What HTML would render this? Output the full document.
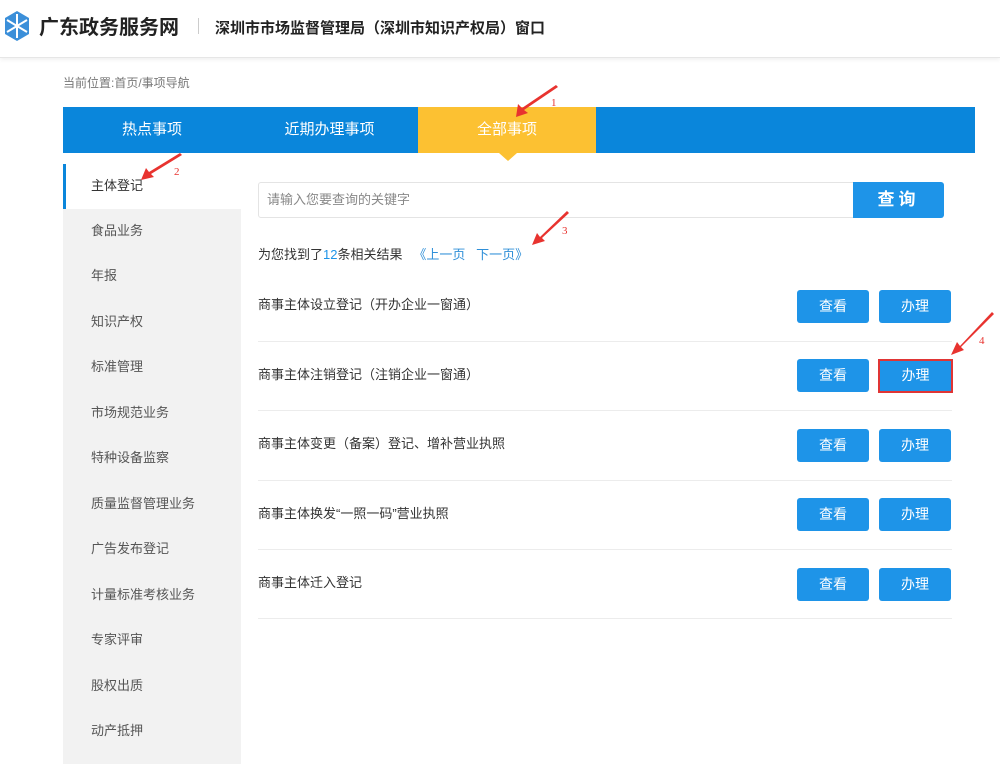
<!DOCTYPE html>
<html><head><meta charset="utf-8"><style>
*{margin:0;padding:0;box-sizing:border-box}
body{width:1000px;height:756px;overflow:hidden;background:#fff;font-family:"Liberation Sans","Noto Sans CJK SC",sans-serif;position:relative;color:#333}
.a{position:absolute}
.hdr{left:0;top:0;width:1000px;height:58px;border-bottom:1px solid #e6e6e6;box-shadow:0 2px 4px rgba(0,0,0,.06)}
.tab{top:107px;height:46px;line-height:46px;color:#fff;font-size:15px;text-align:center}
.side{left:63px;top:164px;width:178px;height:600px;background:#f2f2f2}
.si{left:63px;width:178px;font-size:13px;color:#555;padding-left:28px;height:20px;line-height:20px}
.btn{width:72px;height:33px;background:#1e94e8;color:#fff;font-size:14px;text-align:center;line-height:33px;border-radius:3px}
.row{left:258px;font-size:13px;color:#333}
.sep{left:258px;width:694px;height:1px;background:#ececec}
</style></head><body>
<div class="a hdr"></div>
<svg class="a" style="left:2px;top:10px" width="30" height="32" viewBox="0 0 30 32"><g fill="#3b8fd9"><polygon points="15,1 27,8 27,24 15,31 3,24 3,8"/></g><g stroke="#fff" stroke-width="2"><line x1="15" y1="4" x2="15" y2="28"/><line x1="5" y1="10" x2="25" y2="22"/><line x1="5" y1="22" x2="25" y2="10"/></g></svg>
<div class="a" style="left:39px;top:11px;font-size:20px;font-weight:bold;color:#222">广东政务服务网</div>
<div class="a" style="left:198px;top:18px;width:1px;height:16px;background:#ccc"></div>
<div class="a" style="left:215px;top:17px;font-size:15px;font-weight:bold;color:#222">深圳市市场监督管理局（深圳市知识产权局）窗口</div>
<div class="a" style="left:63px;top:74px;font-size:12px;color:#777">当前位置:首页/事项导航</div>
<div class="a" style="left:63px;top:107px;width:912px;height:46px;background:#0a86db"></div>
<div class="a tab" style="left:63px;width:178px">热点事项</div>
<div class="a tab" style="left:241px;width:177px">近期办理事项</div>
<div class="a tab" style="left:418px;width:178px;background:#fcc132">全部事项</div>
<div class="a" style="left:499px;top:153px;width:0;height:0;border-left:9px solid transparent;border-right:9px solid transparent;border-top:8px solid #fcc132"></div>
<div class="a side"></div>
<div class="a" style="left:63px;top:164px;width:178px;height:45px;background:#fff;border-left:3px solid #0a86db"></div>
<div class="a si" style="top:176px;color:#333">主体登记</div>
<div class="a si" style="top:221px">食品业务</div>
<div class="a si" style="top:266px">年报</div>
<div class="a si" style="top:312px">知识产权</div>
<div class="a si" style="top:357px">标准管理</div>
<div class="a si" style="top:403px">市场规范业务</div>
<div class="a si" style="top:448px">特种设备监察</div>
<div class="a si" style="top:494px">质量监督管理业务</div>
<div class="a si" style="top:539px">广告发布登记</div>
<div class="a si" style="top:585px">计量标准考核业务</div>
<div class="a si" style="top:630px">专家评审</div>
<div class="a si" style="top:676px">股权出质</div>
<div class="a si" style="top:721px">动产抵押</div>
<div class="a" style="left:258px;top:182px;width:596px;height:36px;border:1px solid #e4e4e4;border-radius:3px 0 0 3px;font-size:13px;color:#888;padding-left:8px;line-height:34px">请输入您要查询的关键字</div>
<div class="a" style="left:853px;top:182px;width:91px;height:36px;background:#1e94e8;border-radius:0 3px 3px 0;color:#fff;font-size:17px;font-weight:bold;text-align:center;line-height:36px;letter-spacing:4px">查询</div>
<div class="a" style="left:258px;top:244px;font-size:13px;color:#333">为您找到了<span style="color:#1e94e8">12</span>条相关结果 &nbsp;&nbsp;<span style="color:#2f8fd8">《上一页 &nbsp;&nbsp;下一页》</span></div>
<div class="a row" style="top:294px">商事主体设立登记（开办企业一窗通）</div>
<div class="a row" style="top:364px">商事主体注销登记（注销企业一窗通）</div>
<div class="a row" style="top:433px">商事主体变更（备案）登记、增补营业执照</div>
<div class="a row" style="top:503px">商事主体换发“一照一码”营业执照</div>
<div class="a row" style="top:572px">商事主体迁入登记</div>
<div class="a sep" style="top:341px"></div><div class="a sep" style="top:410px"></div><div class="a sep" style="top:480px"></div><div class="a sep" style="top:549px"></div><div class="a sep" style="top:618px"></div>
<div class="a btn" style="left:797px;top:290px">查看</div><div class="a btn" style="left:879px;top:290px">办理</div>
<div class="a btn" style="left:797px;top:359px">查看</div><div class="a btn" style="left:878px;top:359px;border:2px solid #e03535;line-height:29px;width:75px;height:34px;border-radius:0">办理</div>
<div class="a btn" style="left:797px;top:429px">查看</div><div class="a btn" style="left:879px;top:429px">办理</div>
<div class="a btn" style="left:797px;top:498px">查看</div><div class="a btn" style="left:879px;top:498px">办理</div>
<div class="a btn" style="left:797px;top:568px">查看</div><div class="a btn" style="left:879px;top:568px">办理</div>
<svg class="a" style="left:0;top:0" width="1000" height="756">
<g fill="#e8332f">
<polygon points="556,85 522,108 518,104 516,117 528,113 524,110 558,87"/>
<polygon points="180,153 149,172 146,168 141,180 154,177 151,174 182,155"/>
<polygon points="567,211 540,237 537,233 532,245 545,241 542,238 569,213"/>
<polygon points="992,312 960,346 957,342 951,355 964,350 961,347 994,314"/>
</g>
<g fill="#e8332f" font-size="11" font-family="Liberation Serif,serif">
<text x="551" y="106">1</text><text x="174" y="175">2</text><text x="562" y="234">3</text><text x="979" y="344">4</text>
</g></svg>
</body></html>
